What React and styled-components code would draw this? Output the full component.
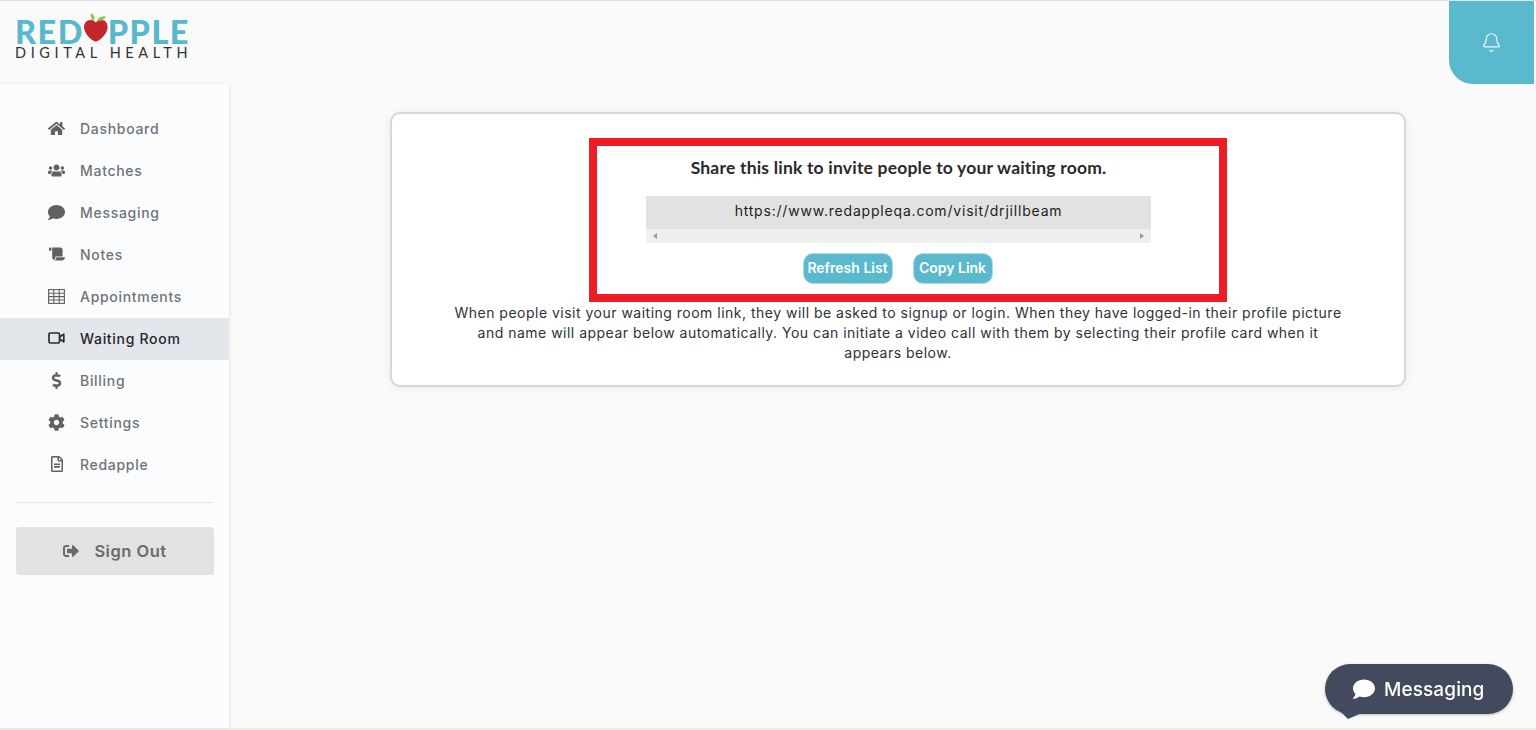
import React from "react"
import styled, { createGlobalStyle } from "styled-components"
import {
  FaHome,
  FaUsers,
  FaComment,
  FaScroll,
  FaDollarSign,
  FaCog,
  FaRegFileAlt,
  FaSignOutAlt,
} from "react-icons/fa"
import { Bell } from "lucide-react"

const GlobalStyle = createGlobalStyle`
  * { box-sizing: border-box; }
  html, body { margin: 0; padding: 0; height: 100%; }
  body {
    background: #fafafa;
    font-family: "Inter", "Noto Sans", "Liberation Sans", sans-serif;
    overflow: hidden;
  }
`

const Page = styled.div`
  height: 730px;
  display: flex;
  flex-direction: column;
  border-top: 1px solid #e2e2e2;
  border-bottom: 2px solid #f1ebe3;
`

const Header = styled.header`
  height: 83px;
  flex: none;
  display: flex;
  justify-content: space-between;
  padding-right: 2px;
`

const Logo = styled.div`
  padding: 17px 0 0 15px;
  width: 190px;
`

const LogoTop = styled.div`
  display: flex;
  align-items: center;
  height: 27px;
  line-height: 27px;
  color: #58b9ce;
  font-family: "Lato", sans-serif;
  font-weight: 900;
  font-size: 32.5px;
  letter-spacing: 1.5px;
`

const LogoBottom = styled.div`
  margin-top: 0;
  color: #333;
  font-family: "Lato", sans-serif;
  font-size: 14.5px;
  line-height: 16px;
  letter-spacing: 4.6px;
  white-space: nowrap;
`

const BellTab = styled.div`
  width: 85px;
  height: 83px;
  background: #5ab9cd;
  border-bottom-left-radius: 24px;
  display: flex;
  align-items: center;
  justify-content: center;
  color: #eef8fa;
`

const Body = styled.div`
  flex: 1;
  display: flex;
  min-height: 0;
`

const Sidebar = styled.aside`
  width: 230px;
  flex: none;
  background: #fbfcfe;
  border-right: 1px solid #eeeeee;
  box-shadow: 0 0 3px rgba(0, 0, 0, 0.08);
  padding-top: 24px;
`

const NavItem = styled.div`
  height: 42px;
  display: flex;
  align-items: center;
  gap: 15px;
  padding: 0 0 2px 48px;
  font-size: 14px;
  letter-spacing: 0.7px;
  font-weight: 500;
  color: ${(p) => (p.$active ? "#23272f" : "#6f7378")};
  background: ${(p) => (p.$active ? "#e3e6ea" : "transparent")};
`

const NavIcon = styled.span`
  width: 17px;
  display: flex;
  justify-content: center;
  color: ${(p) => (p.$active ? "#2b2b2b" : "#616161")};
  font-size: 16px;
`

const Divider = styled.div`
  height: 1px;
  margin: 16px 15px 24px 16px;
  background: #e2e4e6;
`

const SignOut = styled.div`
  height: 48px;
  margin: 0 15px 0 16px;
  border-radius: 3px;
  background: #e2e2e2;
  color: #6b6b6b;
  display: flex;
  align-items: center;
  justify-content: center;
  gap: 15px;
  font-size: 16.5px;
  font-weight: 600;
  letter-spacing: 0.5px;
`

const Main = styled.main`
  flex: 1;
  padding: 28px 130px 0 160px;
`

const Card = styled.section`
  background: #fff;
  height: 275px;
  border: 2px solid #d6d6d6;
  border-radius: 10px;
  box-shadow: 0 1px 10px rgba(0, 0, 0, 0.07);
  padding-top: 24px;
  display: flex;
  flex-direction: column;
  align-items: center;
`

const Highlight = styled.div`
  width: 638px;
  height: 164px;
  margin-left: 20px;
  border: 8px solid #ee1c25;
  padding: 12px 68px 0 49px;
  display: flex;
  flex-direction: column;
  align-items: center;
`

const Title = styled.h2`
  margin: 0;
  height: 28px;
  line-height: 20px;
  font-weight: 700;
  color: #2a2a2a;
  font-family: "Lato", sans-serif;
  font-size: 17.5px;
  letter-spacing: 0.2px;
  white-space: nowrap;
`

const LinkBox = styled.div`
  width: 100%;
  margin-top: 10px;
`

const LinkText = styled.div`
  height: 33px;
  padding-bottom: 5px;
  background: #e2e2e2;
  color: #222;
  font-size: 14px;
  letter-spacing: 0.8px;
  display: flex;
  align-items: center;
  justify-content: center;
`

const ScrollTrack = styled.div`
  height: 14px;
  background: #efefef;
  display: flex;
  align-items: center;
  justify-content: space-between;
  padding: 0 7px;
`

const Arrow = styled.span`
  width: 0;
  height: 0;
  border-top: 3.5px solid transparent;
  border-bottom: 3.5px solid transparent;
  ${(p) =>
    p.$right ? "border-left: 4px solid #9b9b9b;" : "border-right: 4px solid #9b9b9b;"}
`

const Buttons = styled.div`
  display: flex;
  gap: 20px;
  margin: 10px 2px 0 0;
`

const Button = styled.button`
  height: 31px;
  width: ${(p) => p.$w}px;
  padding: 0 0 2px;
  border: 1px solid #a9dbe6;
  border-radius: 10px;
  background: #5ab9cd;
  color: #fff;
  font-family: inherit;
  font-size: 14px;
  font-weight: 600;
  white-space: nowrap;
`

const Help = styled.p`
  margin: 1px 0 0;
  width: 900px;
  text-align: center;
  font-size: 14px;
  line-height: 20px;
  letter-spacing: 0.49px;
  color: #2f3136;
`

const MessagingBubble = styled.div`
  position: fixed;
  left: 1325px;
  top: 664px;
  width: 188px;
  height: 50px;
  border-radius: 25px;
  background: #434a5e;
  color: #fff;
  display: flex;
  align-items: center;
  padding-left: 28px;
  gap: 9px;
  font-size: 19px;
  font-weight: 500;
  letter-spacing: 0.1px;
  box-shadow: 0 1px 3px rgba(0, 0, 0, 0.25);
`

const BubbleTail = styled.svg`
  position: absolute;
  left: 10px;
  top: 40px;
`

const VideoIcon = () => (
  <svg width="17" height="14" viewBox="0 0 17 14" fill="none" stroke="currentColor" strokeWidth="1.7">
    <rect x="1" y="2" width="10.5" height="10" rx="1.2" />
    <path d="M11.5 6 15.8 3.2v7.6L11.5 8" strokeLinejoin="round" />
  </svg>
)

const GridIcon = () => (
  <svg width="17" height="15" viewBox="0 0 17 15" fill="none" stroke="currentColor" strokeWidth="1.1">
    <rect x="0.6" y="0.6" width="15.8" height="13.8" />
    <path d="M.6 4.2h15.8M.6 7.6h15.8M.6 11h15.8M5.8.6v13.8M11.2.6v13.8" />
  </svg>
)

const items = [
  { label: "Dashboard", icon: <FaHome size={17} /> },
  { label: "Matches", icon: <FaUsers size={17} /> },
  { label: "Messaging", icon: <FaComment size={17} /> },
  { label: "Notes", icon: <FaScroll size={16} /> },
  { label: "Appointments", icon: <GridIcon /> },
  { label: "Waiting Room", icon: <VideoIcon />, active: true },
  { label: "Billing", icon: <FaDollarSign size={17} /> },
  { label: "Settings", icon: <FaCog size={17} /> },
  { label: "Redapple", icon: <FaRegFileAlt size={16} /> },
]

const App = () => {
  return (
    <Page>
      <GlobalStyle />
      <Header>
        <Logo>
          <LogoTop>
            RED
            <svg width="26" height="30" viewBox="0 0 26 30" style={{ margin: "-8px -1px 0 -1px" }}>
              <path d="M13 29C7 27 1 20 1 14c0-5 4-8 8-7 2 .5 3 1.5 4 2.5 1-1 2.500-2 4.500-2.500 4-1 7.500 2 7.500 7 0 6-6 13-12 15Z" fill="#c1272d" />
              <path d="M11 8C8 6 7.500 3 8 0c3 1 4.500 4 3 8ZM14 8c1-3 4-5 9-5-1 3-4 5-9 5Z" fill="#8cc63f" />
            </svg>
            PPLE
          </LogoTop>
          <LogoBottom>DIGITAL HEALTH</LogoBottom>
        </Logo>
        <BellTab>
          <Bell size={21} strokeWidth={1.4} />
        </BellTab>
      </Header>
      <Body>
        <Sidebar>
          {items.map((item) => (
            <NavItem key={item.label} $active={item.active}>
              <NavIcon $active={item.active}>{item.icon}</NavIcon>
              {item.label}
            </NavItem>
          ))}
          <Divider />
          <SignOut>
            <FaSignOutAlt size={16} />
            Sign Out
          </SignOut>
        </Sidebar>
        <Main>
          <Card>
            <Highlight>
              <Title>Share this link to invite people to your waiting room.</Title>
              <LinkBox>
                <LinkText>https://www.redappleqa.com/visit/drjillbeam</LinkText>
                <ScrollTrack>
                  <Arrow />
                  <Arrow $right />
                </ScrollTrack>
              </LinkBox>
              <Buttons>
                <Button $w={90}>Refresh List</Button>
                <Button $w={80}>Copy Link</Button>
              </Buttons>
            </Highlight>
            <Help>
              When people visit your waiting room link, they will be asked to signup or login. When they have logged-in their profile picture
              <br />
              and name will appear below automatically. You can initiate a video call with them by selecting their profile card when it
              <br />
              appears below.
            </Help>
          </Card>
        </Main>
      </Body>
      <MessagingBubble>
        <FaComment size={22} />
        Messaging
        <BubbleTail width="34" height="16" viewBox="0 0 34 16">
          <path d="M0 0 C2 5 5 8 8 10 L13 15 L27 9 L30 0 Z" fill="#434a5e" />
        </BubbleTail>
      </MessagingBubble>
    </Page>
  )
}

export default App
